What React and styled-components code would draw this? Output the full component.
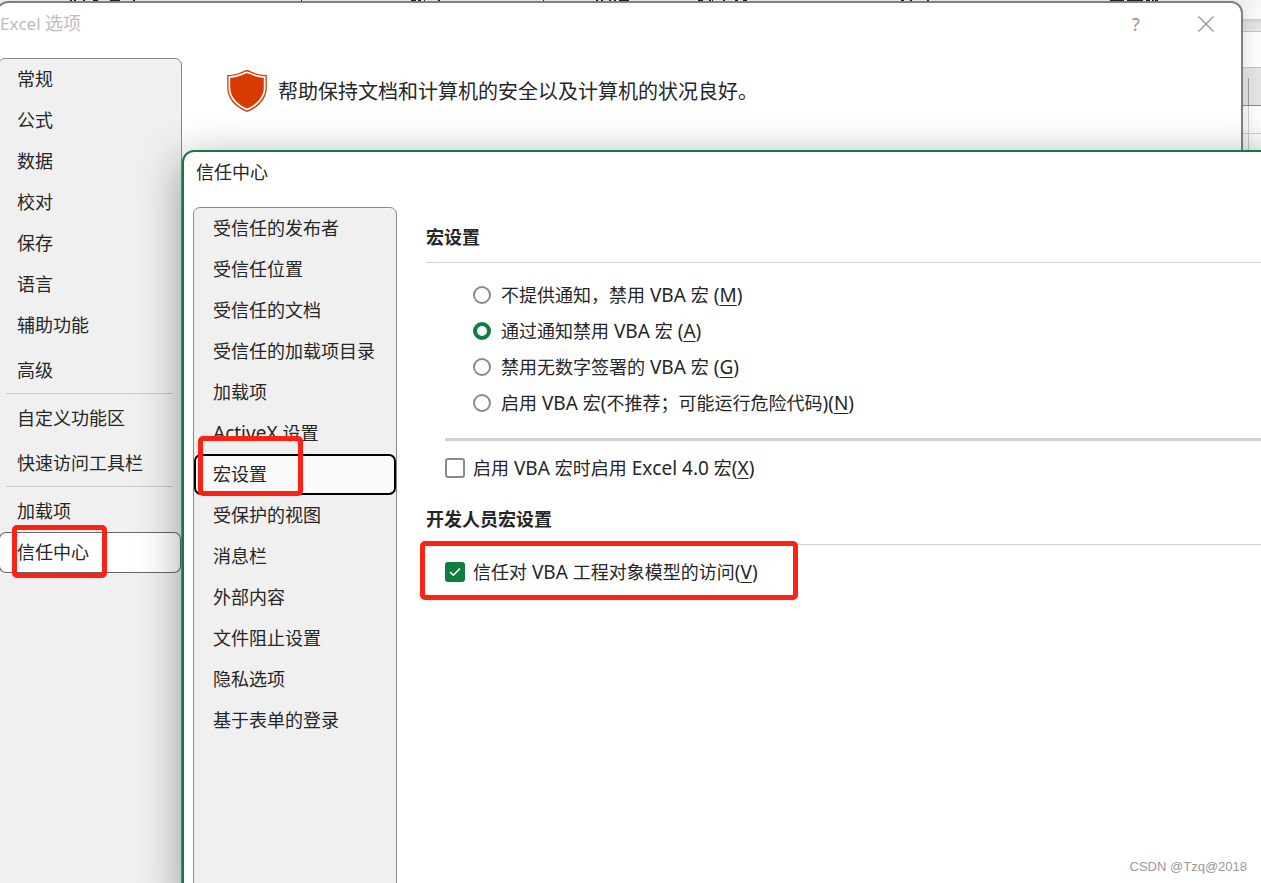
import { useState } from "react";
import styled, { createGlobalStyle } from "styled-components";

const optionPages = [
  { name: "常规" },
  { name: "公式" },
  { name: "数据" },
  { name: "校对" },
  { name: "保存" },
  { name: "语言" },
  { name: "辅助功能" },
  { name: "高级", spaced: true, divider: true },
  { name: "自定义功能区" },
  { name: "快速访问工具栏", spaced: true, divider: true },
  { name: "加载项" },
  { name: "信任中心", marked: true },
];

const trustPages = [
  { name: "受信任的发布者" },
  { name: "受信任位置" },
  { name: "受信任的文档" },
  { name: "受信任的加载项目录" },
  { name: "加载项" },
  { name: "ActiveX 设置" },
  { name: "宏设置", marked: true },
  { name: "受保护的视图" },
  { name: "消息栏" },
  { name: "外部内容" },
  { name: "文件阻止设置" },
  { name: "隐私选项" },
  { name: "基于表单的登录" },
];

const macroChoices = [
  { text: "不提供通知，禁用 VBA 宏 (", hotkey: "M" },
  { text: "通过通知禁用 VBA 宏 (", hotkey: "A" },
  { text: "禁用无数字签署的 VBA 宏 (", hotkey: "G" },
  { text: "启用 VBA 宏(不推荐；可能运行危险代码)(", hotkey: "N" },
];

// tops of the ribbon labels that stick out above the dialog: [x, width]
const ribbonMarks = [
  [70, 2], [74, 2], [83, 2], [93, 5], [110, 10], [133, 2],
  [301, 1], [411, 5], [418, 3], [424, 1], [438, 2], [543, 1], [596, 2],
  [601, 2], [609, 2], [614, 2], [619, 10], [698, 5], [709, 2], [712, 1],
  [723, 2], [735, 3], [743, 4], [901, 3], [910, 2], [927, 2],
  [1110, 14], [1127, 16], [1146, 4], [1152, 2], [1155, 3],
];

export default function App() {
  const [optionPage, setOptionPage] = useState("信任中心");
  const [trustPage, setTrustPage] = useState("宏设置");
  const [macro, setMacro] = useState("A");
  const [excel4, setExcel4] = useState(false);
  const [trustModel, setTrustModel] = useState(true);

  return (
    <Desktop>
      <GlobalStyle />
      <Workbook>
        <Ribbon>
          <svg width="1261" height="1" aria-hidden="true">
            {ribbonMarks.map(([x, width]) => (
              <rect key={x} x={x} width={width} height="1" fill="#222" />
            ))}
          </svg>
        </Ribbon>
        <RibbonEdge />
        <FormulaBar />
        <ColumnHeader>
          <HeaderCell />
        </ColumnHeader>
        <SheetRow>
          <SheetCell />
        </SheetRow>
        <SheetRow>
          <SheetCell />
        </SheetRow>
      </Workbook>

      <OptionsDialog aria-label="Excel 选项">
        <OptionsTitleBar>
          <OptionsTitle>
            <TitleLatin>Excel </TitleLatin>选项
          </OptionsTitle>
          <TitleButtons>
            <TitleButton type="button" aria-label="帮助">
              ?
            </TitleButton>
            <TitleButton type="button" aria-label="关闭">
              <svg width="16" height="16" viewBox="0 0 16 16" fill="none">
                <path d="M.5 .5 15.500 15.500M15.500 .5 .5 15.500" stroke="#949494" strokeWidth="1.3" />
              </svg>
            </TitleButton>
          </TitleButtons>
        </OptionsTitleBar>
        <OptionsBody>
          <OptionsNav>
            {optionPages.map((page) => (
              <NavEntry key={page.name} $spaced={page.spaced}>
                <OptionsNavButton
                  type="button"
                  $selected={page.name === optionPage}
                  onClick={() => setOptionPage(page.name)}
                >
                  {page.name}
                </OptionsNavButton>
                {page.divider && <NavDivider />}
                {page.marked && <OptionsMark />}
              </NavEntry>
            ))}
          </OptionsNav>
          <Intro>
            <Shield />
            <IntroText>帮助保持文档和计算机的安全以及计算机的状况良好。</IntroText>
          </Intro>
        </OptionsBody>
      </OptionsDialog>

      <TrustDialog aria-label="信任中心">
        <TrustTitle>信任中心</TrustTitle>
        <TrustBody>
          <TrustNav>
            {trustPages.map((page) => (
              <NavEntry key={page.name}>
                <TrustNavButton
                  type="button"
                  $selected={page.name === trustPage}
                  onClick={() => setTrustPage(page.name)}
                >
                  <MixedText text={page.name} />
                </TrustNavButton>
                {page.marked && <TrustMark />}
              </NavEntry>
            ))}
          </TrustNav>
          <Settings>
            <SectionHeading>宏设置</SectionHeading>
            <RadioList>
              {macroChoices.map((choice) => (
                <RadioLabel key={choice.hotkey}>
                  <Radio
                    type="radio"
                    name="macro"
                    checked={macro === choice.hotkey}
                    onChange={() => setMacro(choice.hotkey)}
                  />
                  <MixedText text={choice.text} hotkey={choice.hotkey} />
                </RadioLabel>
              ))}
            </RadioList>
            <ThickRule />
            <CheckRow>
              <CheckLabel>
                <Checkbox
                  type="checkbox"
                  checked={excel4}
                  onChange={(event) => setExcel4(event.target.checked)}
                />
                <MixedText text="启用 VBA 宏时启用 Excel 4.0 宏(" hotkey="X" />
              </CheckLabel>
            </CheckRow>
            <SectionHeading>开发人员宏设置</SectionHeading>
            <CheckRow>
              <CheckLabel>
                <CheckHolder>
                  <Checkbox
                    type="checkbox"
                    checked={trustModel}
                    onChange={(event) => setTrustModel(event.target.checked)}
                  />
                  {trustModel && <Tick />}
                </CheckHolder>
                <MixedText text="信任对 VBA 工程对象模型的访问(" hotkey="V" />
              </CheckLabel>
              <SettingMark />
            </CheckRow>
          </Settings>
        </TrustBody>
      </TrustDialog>
      <Watermark>CSDN @Tzq@2018</Watermark>
    </Desktop>
  );
}

// latin runs are set one size larger than the chinese text around them
function MixedText({ text, hotkey }) {
  const parts = text.split(/([ -~]+)/);

  return (
    <span>
      {parts.map((part, index) =>
        index % 2 ? <Latin key={index}>{part}</Latin> : part
      )}
      {hotkey && (
        <Latin>
          <Hotkey>{hotkey}</Hotkey>)
        </Latin>
      )}
    </span>
  );
}

function Shield() {
  return (
    <svg width="40" height="42" viewBox="0 0 40 42" aria-hidden="true">
      <path
        d="M20 0C24 0 26 4.600 39.800 5V18C39.800 29 31 38 20 42 9 38 .2 29 .2 18V5C14 4.600 16 0 20 0Z"
        fill="#d83b01"
      />
      <path
        d="M20 1.500C24 1.900 27 5.600 38.500 6.200V18C38.500 28 30 36.500 20 40.500 10 36.500 1.500 28 1.500 18V6.200C13 5.600 16 1.900 20 1.500Z"
        fill="#fff"
      />
      <path
        d="M20 3.200C24 3.800 27 7.200 36.800 7.800V18C36.800 27 29 34.800 20 38.600 11 34.800 3.200 27 3.200 18V7.800C13 7.200 16 3.800 20 3.200Z"
        fill="#d83b01"
      />
    </svg>
  );
}

function Tick() {
  return (
    <TickIcon width="12" height="10" viewBox="0 0 12 10" fill="none">
      <path d="M1 5 4.300 8.200 11 1.500" stroke="#fff" strokeWidth="1.500" />
    </TickIcon>
  );
}

const GlobalStyle = createGlobalStyle`
  body {
    margin: 0;
    font-family: "Noto Sans", "Noto Sans CJK SC", sans-serif;
    font-size: 18px;
    line-height: 24px;
    font-kerning: none;
    color: #262626;
  }

  * {
    box-sizing: border-box;
  }
`;

const Desktop = styled.div`
  position: relative;
  min-height: 100vh;
  overflow: hidden;
  background: #fff;
`;

const Workbook = styled.div`
  display: flex;
  flex-direction: column;
`;

const Ribbon = styled.div`
  height: 19px;
  background: linear-gradient(#f6f6f6, #fdfdfd);

  svg {
    display: block;
  }
`;

const RibbonEdge = styled.div`
  height: 13px;
  background: linear-gradient(#cfcfcf, #e4e4e4 4px, #e8e8e8);
  border-bottom: 1px solid #c6c6c6;
`;

const FormulaBar = styled.div`
  height: 36px;
  border-bottom: 1px solid #c6c6c6;
`;

const ColumnHeader = styled.div`
  display: flex;
  height: 38px;
  padding: 10px 12px 0 0;
  background: #e6e6e6;
  border-bottom: 1px solid #8c8c8c;
`;

const HeaderCell = styled.div`
  flex: 1;
  border-right: 1px solid #a0a0a0;
`;

const SheetRow = styled.div`
  display: flex;
  height: 28px;
  padding-right: 12px;
  border-bottom: 1px solid #d0d0d0;
`;

const SheetCell = styled.div`
  flex: 1;
  border-right: 1px solid #d0d0d0;
`;

const OptionsDialog = styled.section`
  position: absolute;
  top: 1px;
  right: 18px;
  bottom: -20px;
  left: -4px;
  display: flex;
  flex-direction: column;
  background: #fff;
  border: 2px solid #808080;
  border-radius: 12px;
  box-shadow: 0 0 24px rgba(0, 0, 0, 0.15);
`;

const OptionsTitleBar = styled.header`
  display: flex;
  justify-content: space-between;
  align-items: center;
  height: 41px;
  padding-right: 15px;
  padding-left: 2px;
`;

const OptionsTitle = styled.h1`
  margin: 0;
  font-size: 18px;
  font-weight: 400;
  color: #bdbdbd;
`;

const TitleLatin = styled.span`
  font-size: 17px;
`;

const TitleButtons = styled.div`
  display: flex;
  gap: 30px;
`;

const TitleButton = styled.button`
  display: flex;
  justify-content: center;
  align-items: center;
  width: 40px;
  height: 32px;
  padding: 0;
  border: none;
  background: none;
  font: inherit;
  color: #949494;
`;

const OptionsBody = styled.div`
  display: flex;
  flex: 1;
  align-items: stretch;
  padding-top: 14px;
`;

const OptionsNav = styled.nav`
  width: 184px;
  background: #f0f0f0;
  border: 1px solid #8a8a8a;
  border-radius: 7px;
`;

const NavEntry = styled.div`
  position: relative;
  margin-top: ${({ $spaced }) => ($spaced ? "4px" : "0")};
`;

const NavButton = styled.button`
  display: block;
  width: 100%;
  height: 41px;
  padding: 0 18px 2px;
  border: none;
  border-radius: 7px;
  background: none;
  font: inherit;
  color: inherit;
  text-align: left;
`;

const OptionsNavButton = styled(NavButton)`
  background: ${({ $selected }) => ($selected ? "#fff" : "none")};
  box-shadow: ${({ $selected }) => ($selected ? "inset 0 0 0 1px #666" : "none")};
`;

const TrustNavButton = styled(NavButton)`
  padding-left: 19px;
  background: ${({ $selected }) => ($selected ? "#fafafa" : "none")};
  box-shadow: ${({ $selected }) => ($selected ? "inset 0 0 0 2px #000" : "none")};
`;

const NavDivider = styled.hr`
  height: 1px;
  margin: 2px 8px 4px 7px;
  border: none;
  background: #c8c8c8;
`;

const Intro = styled.div`
  display: flex;
  align-items: flex-start;
  gap: 11px;
  padding: 12px 0 0 45px;
`;

const IntroText = styled.p`
  margin: 10px 0;
  font-size: 20px;
`;

const TrustDialog = styled.section`
  position: absolute;
  top: 150px;
  right: -20px;
  bottom: -20px;
  left: 182px;
  display: flex;
  flex-direction: column;
  background: #fff;
  border: 2px solid #107c41;
  border-radius: 12px;
  box-shadow: 0 10px 44px rgba(0, 0, 0, 0.38);
`;

const TrustTitle = styled.h2`
  margin: 0;
  padding: 8px 12px;
  font-size: 18px;
  font-weight: 400;
`;

const TrustBody = styled.div`
  display: flex;
  flex: 1;
  padding: 15px 0 0 9px;
`;

const TrustNav = styled.nav`
  flex: none;
  width: 204px;
  background: #f0f0f0;
  border: 1px solid #8a8a8a;
  border-radius: 7px;
`;

const Settings = styled.div`
  flex: 1;
  padding: 18px 0 0 29px;
`;

const SectionHeading = styled.h3`
  margin: 0;
  padding-bottom: 13px;
  border-bottom: 1px solid #d0d0d0;
  font-size: 18px;
  font-weight: 700;
`;

const RadioList = styled.div`
  display: flex;
  flex-direction: column;
  padding: 14px 0 17px 47px;
`;

const RadioLabel = styled.label`
  display: flex;
  align-items: center;
  gap: 10px;
  height: 36px;
`;

const Radio = styled.input`
  appearance: none;
  width: 18px;
  height: 18px;
  margin: 0;
  border: ${({ checked }) => (checked ? "4px solid #107c41" : "2px solid #8a8a8a")};
  border-radius: 50%;
  background: #fff;
`;

const Latin = styled.span`
  font-size: 19px;
`;

const Hotkey = styled.span`
  text-decoration: underline;
  text-decoration-thickness: 1px;
  text-underline-offset: 3px;
`;

const ThickRule = styled.hr`
  height: 3px;
  margin: 0 0 0 19px;
  border: none;
  background: #d0d0d0;
`;

const CheckRow = styled.div`
  position: relative;
  padding: 10px 0 22px 19px;
`;

const CheckLabel = styled.label`
  display: flex;
  align-items: center;
  gap: 8px;
  height: 34px;
`;

const CheckHolder = styled.span`
  position: relative;
  display: flex;
`;

const Checkbox = styled.input`
  appearance: none;
  width: 20px;
  height: 20px;
  margin: 0;
  border: 2px solid ${({ checked }) => (checked ? "#107c41" : "#8a8a8a")};
  border-radius: 3px;
  background: ${({ checked }) => (checked ? "#107c41" : "#fff")};
`;

const TickIcon = styled.svg`
  position: absolute;
  top: 5px;
  left: 4px;
  pointer-events: none;
`;

const Mark = styled.div`
  position: absolute;
  border: 5px solid #ff2113;
  border-radius: 5px;
  pointer-events: none;
`;

const OptionsMark = styled(Mark)`
  top: -7px;
  left: 13px;
  width: 95px;
  height: 53px;
`;

const TrustMark = styled(Mark)`
  top: -18px;
  left: 4px;
  width: 105px;
  height: 60px;
`;

const SettingMark = styled(Mark)`
  top: -4px;
  left: -6px;
  width: 378px;
  height: 59px;
`;

const Watermark = styled.div`
  position: absolute;
  right: 14px;
  bottom: 4px;
  font-family: "Liberation Sans", sans-serif;
  font-size: 13px;
  color: #999;
`;
